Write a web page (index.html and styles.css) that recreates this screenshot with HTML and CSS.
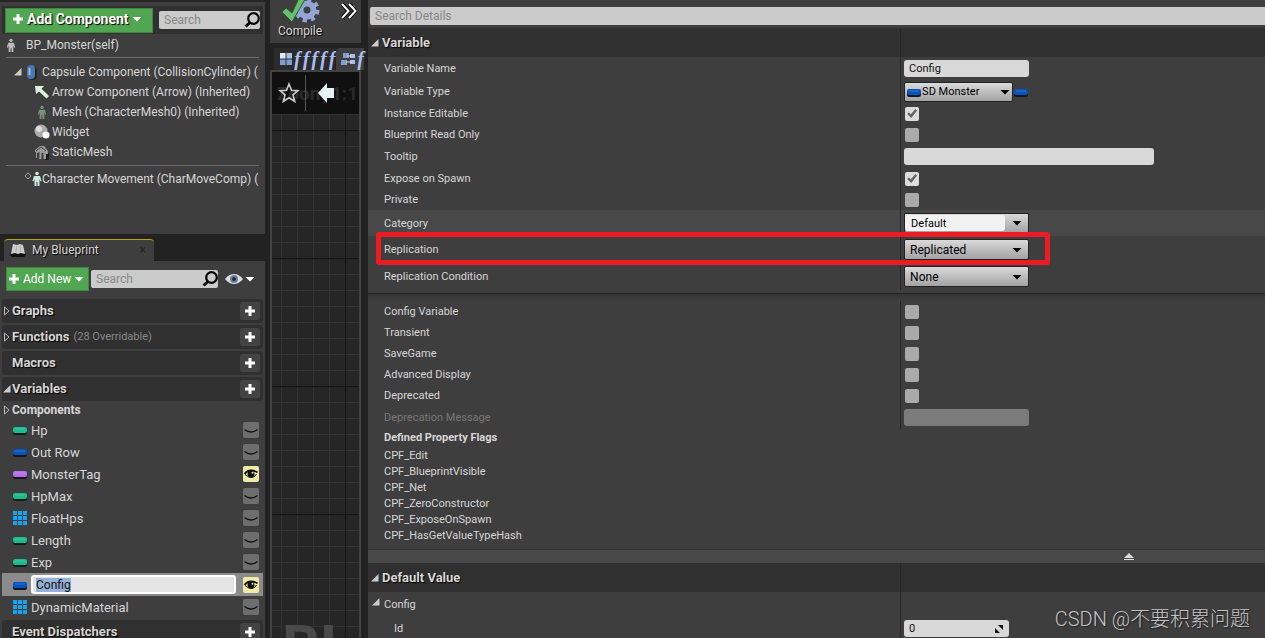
FILE: index.html
```html
<!DOCTYPE html>
<html lang="en">
  <head>
    <meta charset="utf-8">
    <title>BP_Monster</title>
    <link rel="stylesheet" href="styles.css">
  </head>
  <body>
    <!-- shared icons -->
    <svg class="defs" width="0" height="0">
      <symbol id="plus" viewBox="0 0 12 12"><path d="M4.500 1h3v3.500H11v3H7.500V11h-3V7.500H1v-3h3.500z" fill="#fff"/></symbol>
      <symbol id="down" viewBox="0 0 10 8"><path d="M.5 2h9L5 6.500z" fill="currentColor"/></symbol>
      <symbol id="search" viewBox="0 0 16 16"><circle cx="9.500" cy="6.500" r="5.300" fill="none" stroke="#000" stroke-width="2.200"/><path d="M6 10.500L1.500 14.500" stroke="#000" stroke-width="3"/></symbol>
      <symbol id="closed" viewBox="0 0 6 10"><path d="M.5 1v8L5 5z" fill="none" stroke="#bbb"/></symbol>
      <symbol id="open" viewBox="0 0 8 8"><path d="M7.500 0v7.500H0z" fill="#ccc"/></symbol>
      <symbol id="pill" viewBox="0 0 14 10"><rect x="0" y="4" width="14" height="6" rx="2" fill="#181818"/><rect x="0" y="2" width="14" height="6" rx="2" fill="currentColor"/><path d="M2 4h10" stroke="#fff" stroke-opacity=".2"/></symbol>
      <symbol id="array" viewBox="0 0 14 14"><path d="M0 0h4v4H0zM5 0h4v4H5zM10 0h4v4h-4zM0 5h4v4H0zM5 5h4v4H5zM10 5h4v4h-4zM0 10h4v4H0zM5 10h4v4H5zM10 10h4v4h-4z" fill="#12a5f4"/></symbol>
      <symbol id="shut" viewBox="0 0 16 16"><path d="M1.500 7.500Q8 12.500 14.500 7.500" fill="none" stroke="#111" stroke-width="1.300"/></symbol>
      <symbol id="eye" viewBox="0 0 16 16"><path d="M1.500 8Q4 4.500 8 4.500t6.500 2" fill="none" stroke="#111" stroke-width="1.800"/><path d="M2 8.500Q6 12 9 11.500T13.500 8" fill="none" stroke="#111"/><circle cx="8" cy="8" r="3.500" fill="#111"/><circle cx="9.500" cy="6.800" r="1" fill="#eee9a8"/></symbol>
      <symbol id="person" viewBox="0 0 10 16"><circle cx="5" cy="2.500" r="1.800" fill="currentColor"/><path d="M2 5h6l1.500 5-1 .4L7.500 8v7H5.500v-4h-1v4H2.500V8l-1 2.400-1-.4z" fill="currentColor"/></symbol>
    </svg>

    <div class="editor">
      <div class="sidebar">
        <section class="components">
          <div class="components-bar">
            <button class="green add-component"><svg width="12" height="12"><use href="#plus"/></svg>Add Component<svg width="10" height="8"><use href="#down"/></svg></button>
            <label class="search"><input type="text" placeholder="Search" aria-label="Search components"><svg width="16" height="16"><use href="#search"/></svg></label>
          </div>
          <ul class="tree">
            <li class="self"><svg class="grey" width="10" height="15"><use href="#person"/></svg>BP_Monster(self)</li>
            <li class="root"><svg width="8" height="8"><use href="#open"/></svg><svg width="10" height="15" viewBox="0 0 10 15"><rect x="2" y="2" width="8" height="13" rx="4" fill="#222"/><rect x="0" y="0" width="8" height="14" rx="4" fill="#4a78ad"/><path d="M2.500 3v7" stroke="#94b9dc" stroke-width="2"/></svg>Capsule Component (CollisionCylinder) (</li>
            <li class="child"><svg width="14" height="14" viewBox="0 0 14 14"><path d="M0 1h9L6.500 3.800 14 11l-2.500 2.500L4 6.500 1 9z" fill="#dcf3dc"/></svg>Arrow Component (Arrow) (Inherited)</li>
            <li class="child"><svg class="moss" width="14" height="15"><use href="#person"/></svg>Mesh (CharacterMesh0) (Inherited)</li>
            <li class="child"><svg width="16" height="16" viewBox="0 0 16 16"><circle cx="7" cy="7" r="6.500" fill="#aaa"/><circle cx="5" cy="5" r="3" fill="#ddd"/><circle cx="12" cy="11" r="3.500" fill="#fff"/></svg>Widget</li>
            <li class="child"><svg width="14" height="15" viewBox="0 0 14 15"><path d="M10 8h4v7h-4z" fill="#1c1c1c"/><path d="M0 5l5-4 4 0 4 5v3h-2v5H8.500V8h-2v6H4V8H2v5H1V7H0z" fill="#999"/><path d="M1 6l5-4 5 4M4 7v6" stroke="#444" fill="none"/></svg>StaticMesh</li>
            <li class="movement"><svg width="8" height="14" viewBox="0 0 8 14"><path d="M4 .8L7 4 4 7 1 4z" fill="none" stroke="#9aa89a"/></svg><svg class="mint" width="10" height="16"><use href="#person"/></svg>Character Movement (CharMoveComp) (I</li>
          </ul>
        </section>

        <div class="tab"><svg width="16" height="14" viewBox="0 0 16 14"><path d="M0 12l1-2h14l1 2-2 2H2z" fill="#111"/><path d="M3 1l4 1 3-1 3 1 2 9-4-1-3 1-3-1-4 1z" fill="#ccc"/><path d="M6.500 3L6 9M10 3l.5 6" stroke="#aaa"/></svg>My Blueprint<button aria-label="Close tab">×</button></div>
        <section class="blueprint">
          <div class="blueprint-bar">
            <button class="green add-new"><svg width="12" height="12"><use href="#plus"/></svg>Add New<svg width="10" height="8"><use href="#down"/></svg></button>
            <label class="search"><input type="text" placeholder="Search" aria-label="Search blueprint"><svg width="16" height="16"><use href="#search"/></svg></label>
            <button class="view" aria-label="View options"><svg width="18" height="12" viewBox="0 0 18 12"><path d="M0 6Q4 1 9 1t9 5q-4 5-9 5T0 6z" fill="#ddd"/><circle cx="9" cy="6" r="4" fill="#6c7f9c"/><circle cx="9" cy="6" r="2" fill="#222c40"/></svg><svg width="10" height="8"><use href="#down"/></svg></button>
          </div>

          <div class="group"><svg width="6" height="10"><use href="#closed"/></svg><b>Graphs</b><button aria-label="Add graph"><svg width="12" height="12"><use href="#plus"/></svg></button></div>
          <div class="group"><svg width="6" height="10"><use href="#closed"/></svg><b>Functions</b><small>(28 Overridable)</small><button aria-label="Add function"><svg width="12" height="12"><use href="#plus"/></svg></button></div>
          <div class="group"><svg width="6" height="10"></svg><b>Macros</b><button aria-label="Add macro"><svg width="12" height="12"><use href="#plus"/></svg></button></div>
          <div class="group opened"><svg width="8" height="8"><use href="#open"/></svg><b>Variables</b><button aria-label="Add variable"><svg width="12" height="12"><use href="#plus"/></svg></button></div>
          <div class="subgroup"><svg width="6" height="10"><use href="#closed"/></svg><b>Components</b></div>

          <ul class="variables">
            <li><svg class="float" width="14" height="10"><use href="#pill"/></svg>Hp<button aria-label="Show Hp"><svg width="16" height="16"><use href="#shut"/></svg></button></li>
            <li><svg class="struct" width="14" height="10"><use href="#pill"/></svg>Out Row<button aria-label="Show Out Row"><svg width="16" height="16"><use href="#shut"/></svg></button></li>
            <li><svg class="name" width="14" height="10"><use href="#pill"/></svg>MonsterTag<button class="on" aria-label="Hide MonsterTag"><svg width="16" height="16"><use href="#eye"/></svg></button></li>
            <li><svg class="float" width="14" height="10"><use href="#pill"/></svg>HpMax<button aria-label="Show HpMax"><svg width="16" height="16"><use href="#shut"/></svg></button></li>
            <li><svg width="14" height="14"><use href="#array"/></svg>FloatHps<button aria-label="Show FloatHps"><svg width="16" height="16"><use href="#shut"/></svg></button></li>
            <li><svg class="float" width="14" height="10"><use href="#pill"/></svg>Length<button aria-label="Show Length"><svg width="16" height="16"><use href="#shut"/></svg></button></li>
            <li><svg class="float" width="14" height="10"><use href="#pill"/></svg>Exp<button aria-label="Show Exp"><svg width="16" height="16"><use href="#shut"/></svg></button></li>
            <li class="selected"><svg class="struct" width="14" height="10"><use href="#pill"/></svg><input id="rename" type="text" value="Config" aria-label="Variable name"><button class="on" aria-label="Hide Config"><svg width="16" height="16"><use href="#eye"/></svg></button></li>
            <li><svg width="14" height="14"><use href="#array"/></svg>DynamicMaterial<button aria-label="Show DynamicMaterial"><svg width="16" height="16"><use href="#shut"/></svg></button></li>
          </ul>
          <div class="group"><svg width="6" height="10"></svg><b>Event Dispatchers</b><button aria-label="Add dispatcher"><svg width="12" height="12"><use href="#plus"/></svg></button></div>
        </section>
      </div>

      <div class="middle">
        <div class="toolbar">
          <button class="compile">
            <svg width="42" height="24" viewBox="0 0 42 24">
              <circle cx="28" cy="10" r="6.500" fill="none" stroke="#93a5d6" stroke-width="6"/>
              <circle cx="28" cy="10" r="10.500" fill="none" stroke="#93a5d6" stroke-width="4" stroke-dasharray="4.200 4.050"/>
              <path d="M3 12l4-4 6 5L21-4h7L13 22z" fill="#68bd6e" stroke="#2c5c30"/>
            </svg>
            Compile
          </button>
          <button class="more" aria-label="More tools"><svg width="16" height="18" viewBox="0 0 16 18"><path d="M1 2l6.500 7L1 16M8 2l6.500 7L8 16" fill="none" stroke="#000" stroke-width="4"/><path d="M1 2l6.500 7L1 16M8 2l6.500 7L8 16" fill="none" stroke="#fff" stroke-width="2"/></svg></button>
        </div>
        <div class="graph-tabs">
          <div class="graph-tab">
            <svg width="12" height="14" viewBox="0 0 13 15"><path d="M0 1h6v6H0z" fill="#dce8f5"/><path d="M7 1h6v6H7z" fill="#a9c0e0"/><path d="M0 8h6v6H0zM7 8h6v6H7z" fill="#7f9dcd"/></svg>
            <i>f</i><i>f</i><i>f</i><i>f</i><i>f</i>
          </div>
          <div class="graph-tab lit">
            <svg width="14" height="15" viewBox="0 0 14 15"><path d="M2 1h6v5H2zM0 8h6v5H0z" fill="#7f9dcd"/><path d="M9 2h5v4H9zM9 8h5v4H9z" fill="#a9bdf0"/><path d="M6 4h4M5 10h5" stroke="#ddd"/></svg>
            <i>f</i>
          </div>
        </div>
        <div class="graph">
          <div class="graph-bar">
            <span class="zoom">Zoom 1:1</span>
            <button aria-label="Bookmark"><svg width="22" height="22" viewBox="0 0 22 22"><path d="M11 2l2.500 6.300 6.500.4-5 4.200 1.700 6.600L11 15.800l-5.700 3.700L7 12.900 2 8.700l6.500-.4z" fill="none" stroke="#ccc" stroke-width="1.600"/></svg></button>
            <button class="back" aria-label="Back"><svg width="18" height="22" viewBox="0 0 18 22"><path d="M0 11L9 1v5h7v10H9v5z" fill="#e4f3f5"/></svg></button>
          </div>
          <div class="grid"><span class="watermark">BL</span></div>
        </div>
      </div>

      <main class="details">
        <div class="details-search"><input type="text" placeholder="Search Details" aria-label="Search Details"></div>
        <div class="head"><h2><svg width="8" height="8"><use href="#open"/></svg>Variable</h2><div class="value"></div></div>
        <div class="row"><label for="vname">Variable Name</label><div class="value"><input class="text" id="vname" type="text" value="Config"></div></div>
        <div class="row"><label for="vtype">Variable Type</label><div class="value"><div class="combo type"><select id="vtype"><option>SD Monster</option></select><svg class="struct lead" width="14" height="10"><use href="#pill"/></svg><svg width="10" height="8"><use href="#down"/></svg></div><svg class="struct" width="14" height="10"><use href="#pill"/></svg></div></div>
        <div class="row short"><label for="editable">Instance Editable</label><div class="value"><input id="editable" type="checkbox" checked></div></div>
        <div class="row short"><label for="readonly">Blueprint Read Only</label><div class="value"><input id="readonly" type="checkbox"></div></div>
        <div class="row"><label for="tooltip">Tooltip</label><div class="value"><input class="text wide" id="tooltip" type="text"></div></div>
        <div class="row short"><label for="expose">Expose on Spawn</label><div class="value"><input id="expose" type="checkbox" checked></div></div>
        <div class="row short"><label for="private">Private</label><div class="value"><input id="private" type="checkbox"></div></div>
        <div class="row tall hover"><label for="category">Category</label><div class="value"><div class="category"><input id="category" type="text" value="Default"><button aria-label="Choose category"><svg width="10" height="8"><use href="#down"/></svg></button></div></div></div>
        <div class="row tall marked"><label for="replication">Replication</label><div class="value"><div class="combo"><select id="replication"><option>Replicated</option></select><svg width="10" height="8"><use href="#down"/></svg></div></div></div>
        <div class="row tall"><label for="condition">Replication Condition</label><div class="value"><div class="combo"><select id="condition"><option>None</option></select><svg width="10" height="8"><use href="#down"/></svg></div></div></div>

        <div class="advanced">
          <div class="row short"><label for="configvar">Config Variable</label><div class="value"><input id="configvar" type="checkbox"></div></div>
          <div class="row short"><label for="transient">Transient</label><div class="value"><input id="transient" type="checkbox"></div></div>
          <div class="row short"><label for="savegame">SaveGame</label><div class="value"><input id="savegame" type="checkbox"></div></div>
          <div class="row short"><label for="advdisplay">Advanced Display</label><div class="value"><input id="advdisplay" type="checkbox"></div></div>
          <div class="row short"><label for="deprecated">Deprecated</label><div class="value"><input id="deprecated" type="checkbox"></div></div>
          <div class="row disabled"><label for="message">Deprecation Message</label><div class="value"><input class="text" id="message" type="text" disabled></div></div>
          <h3>Defined Property Flags</h3>
          <ul class="flags">
            <li>CPF_Edit</li>
            <li>CPF_BlueprintVisible</li>
            <li>CPF_Net</li>
            <li>CPF_ZeroConstructor</li>
            <li>CPF_ExposeOnSpawn</li>
            <li>CPF_HasGetValueTypeHash</li>
          </ul>
        </div>
        <button class="collapse" aria-label="Collapse"><svg width="10" height="8" viewBox="0 0 10 8"><path d="M5 0l5 5H0zM0 6h10v1H0z" fill="#ddd"/></svg></button>

        <div class="head"><h2><svg width="8" height="8"><use href="#open"/></svg>Default Value</h2><div class="value"></div></div>
        <div class="row parent"><span><svg width="8" height="8"><use href="#open"/></svg>Config</span><div class="value"></div></div>
        <div class="row nested"><label for="rowid">Id</label><div class="value"><div class="spin"><input class="text" id="rowid" type="text" value="0"><svg width="10" height="10" viewBox="0 0 10 10"><path d="M4 1h5v5zM1 4v5h5z" fill="#111"/></svg></div></div></div>
      </main>
    </div>

    <div class="credit">CSDN @不要积累问题</div>

    <script>
      // start with the variable name ready to be typed over
      const rename = document.getElementById('rename');
      rename.focus();
      rename.select();
    </script>
  </body>
</html>
```
FILE: styles.css
```css
* {
  box-sizing: border-box;
}

body {
  margin: 0;
  background: #222;
  color: #d6d6d6;
  font-family: Roboto, "Noto Sans CJK SC", sans-serif;
  font-size: 12px;
  overflow: hidden;
}

button, input, select {
  font: inherit;
  color: inherit;
  margin: 0;
  padding: 0;
  border: none;
  outline: none;
  background: none;
}

ul {
  list-style: none;
  margin: 0;
  padding: 0;
}

svg {
  flex: none;
  display: block;
}

.defs {
  position: absolute;
}

.editor {
  display: grid;
  grid-template-columns: 270px 98px minmax(0, 1fr);
  height: 100vh;
}

/* colours of the variable kinds */
.float { color: #18bd8b; }
.struct { color: #0753bd; }
.name { color: #b56fe8; }
.grey { color: #bbb; }
.moss { color: #78917c; }
.mint { color: #cdebd7; }

/* Left column */
.sidebar {
  display: flex;
  flex-direction: column;
  min-height: 0;
  padding-right: 5px;
}

.components {
  flex: none;
  height: 234px;
  padding: 4px 2px 0;
  border-top: 2px solid #262626;
  background: #3e3e3e;
}

.components-bar {
  display: flex;
  align-items: center;
  gap: 6px;
  height: 28px;
  padding: 0 3px;
  background: #303030;
}

.green {
  display: flex;
  align-items: center;
  gap: 3px;
  background: #50a651;
  border: 1px solid #3f8740;
  color: #fff;
  white-space: nowrap;
}

.add-component {
  width: 148px;
  height: 25px;
  padding: 0 0 2px 6px;
  font-size: 14px;
  font-weight: bold;
  text-shadow: 1px 1px 1px #000;
}

.add-new {
  width: 83px;
  height: 24px;
  padding-left: 1px;
}

.search {
  display: flex;
  flex: 1;
  align-items: center;
  min-width: 0;
  height: 18px;
  padding: 0 0 0 5px;
  border-radius: 2px;
  background: #cbcbcb;
}

.search input {
  flex: 1;
  min-width: 0;
  color: #111;
}

::placeholder {
  color: #888;
  opacity: 1;
}

.tree {
  padding: 0 4px;
}

.tree li {
  display: flex;
  align-items: center;
  gap: 2px;
  height: 20px;
  white-space: nowrap;
}

.tree .self {
  height: 24px;
  padding-bottom: 1px;
  gap: 10px;
  border-bottom: 1px solid #6a6a6a;
}

.tree .root {
  height: 24px;
  padding: 4px 0 0 8px;
  gap: 5px;
}

.tree .child {
  padding-left: 28px;
}

.tree .child svg {
  width: 16px;
}

.tree .movement {
  height: 27px;
  margin-top: 3px;
  padding-left: 18px;
  gap: 0;
  border-top: 1px solid #6a6a6a;
  overflow: hidden;
}

.tab {
  display: flex;
  flex: none;
  align-items: center;
  gap: 6px;
  width: 150px;
  height: 22px;
  margin: 5px 0 0 4px;
  padding: 0 8px 2px 6px;
  border-top: 1px solid #b8a513;
  border-radius: 4px 4px 0 0;
  background: #3e3e3e;
  text-shadow: 1px 1px 1px #000;
}

.tab button {
  margin-left: auto;
  color: #222;
  text-shadow: none;
}

.blueprint {
  flex: 1;
  min-height: 0;
  padding: 0 2px;
  background: #3e3e3e;
  overflow: hidden;
}

.blueprint-bar {
  display: flex;
  align-items: center;
  gap: 2px;
  height: 38px;
  padding: 0 8px 2px 4px;
}

.view {
  display: flex;
  align-items: center;
  gap: 2px;
  padding-left: 5px;
  color: #fff;
}

.group {
  display: flex;
  align-items: center;
  height: 24px;
  margin-bottom: 2px;
  padding: 0 3px 1px 2px;
  gap: 2px;
  border-radius: 3px;
  background: #303030;
  font-size: 13px;
  text-shadow: 1px 1px 1px #000;
}

.group.opened {
  margin-bottom: 0;
  padding-left: 1px;
  gap: 1px;
}

.group small {
  margin-left: 2px;
  font-size: 11px;
  color: #888;
  text-shadow: none;
}

.group button {
  display: grid;
  place-items: center;
  width: 20px;
  height: 18px;
  margin-left: auto;
  border-radius: 2px;
  background: #444;
}

.subgroup {
  display: flex;
  align-items: center;
  gap: 2px;
  height: 18px;
  padding-left: 2px;
}

.variables {
  margin: 0 0 2px;
  font-size: 13px;
}

.variables li {
  display: flex;
  align-items: center;
  gap: 4px;
  height: 22px;
  padding: 0 4px 0 11px;
}

.variables .selected {
  height: 23px;
  background: #8b8b8b;
}

.variables button {
  margin-left: auto;
  border-radius: 2px;
  background: #6e6e6e;
}

.variables .on {
  background: #eeeba8;
}

.variables input {
  width: 205px;
  height: 19px;
  padding: 0 3px;
  border: 2px solid #fff;
  border-radius: 3px;
  background: #e4e4e4;
  color: #111;
  font-size: 12px;
}

.variables input::selection {
  background: #94b1d6;
  color: #111;
}

/* Graph column */
.middle {
  display: flex;
  flex-direction: column;
  min-height: 0;
  padding-right: 7px;
}

.toolbar {
  display: flex;
  flex: none;
  justify-content: space-between;
  align-items: flex-start;
  height: 43px;
  padding: 0 4px 0 8px;
  background: #3e3e3e;
}

.compile {
  display: flex;
  flex-direction: column;
  align-items: center;
  text-shadow: 1px 1px 1px #000;
}

.more {
  padding-top: 2px;
}

.graph-tabs {
  display: flex;
  flex: none;
  gap: 1px;
  height: 22px;
  margin: 5px 0 0 4px;
}

.graph-tab {
  display: flex;
  align-items: center;
  gap: 2px;
  width: 65px;
  padding-left: 6px;
  background: #2b2b2b;
}

.graph-tab.lit {
  width: 30px;
  padding-left: 5px;
  border-radius: 4px 0 0 0;
  background: #3e3e3e;
}

.graph-tab i {
  color: #a9bdf0;
  font-family: "Liberation Serif", serif;
  font-size: 20px;
  font-weight: bold;
  line-height: 20px;
}

.graph {
  display: flex;
  flex: 1;
  flex-direction: column;
  min-height: 0;
  border: 2px solid #424242;
  border-bottom: none;
}

.graph-bar {
  position: relative;
  display: flex;
  align-items: center;
  height: 42px;
  padding-left: 6px;
  gap: 5px;
  background: #101010;
  overflow: hidden;
}

/* zoom level, faint behind the buttons */
.zoom {
  position: absolute;
  left: 5px;
  color: #2b2b2b;
  font-size: 19px;
  font-weight: bold;
  white-space: nowrap;
}

.graph-bar button {
  position: relative;
}

.graph-bar .back {
  height: 36px;
  padding-left: 12px;
  border-left: 1px solid #555;
}

.grid {
  display: flex;
  flex: 1;
  align-items: flex-end;
  background-color: #262626;
  background-image:
    linear-gradient(90deg, #141414 1px, transparent 1px),
    linear-gradient(#141414 1px, transparent 1px),
    linear-gradient(90deg, #333 1px, transparent 1px),
    linear-gradient(#333 1px, transparent 1px);
  background-size: 128px 128px, 128px 128px, 16px 16px, 16px 16px;
  background-position: 73px 0, 0 16px, 9px 0, 0 0;
  overflow: hidden;
}

.watermark {
  height: 21px;
  margin-left: 10px;
  color: #4a4a4a;
  font-size: 60px;
  font-weight: bold;
  line-height: 60px;
}

/* Details */
.details {
  min-width: 0;
  background: #3e3e3e;
  font-size: 11px;
  overflow: hidden;
}

.details-search {
  height: 28px;
  padding: 7px 0 3px 2px;
}

.details-search input {
  display: block;
  width: 100%;
  height: 18px;
  padding: 0 5px;
  border-radius: 2px 0 0 2px;
  background: #cbcbcb;
  color: #111;
  font-size: 12px;
}

.head, .row {
  display: grid;
  grid-template-columns: 35fr 24fr;
  align-items: center;
  height: 23px;
}

.head {
  height: 29px;
  background: #303030;
}

.head h2 {
  display: flex;
  align-items: center;
  gap: 3px;
  margin: 0;
  padding-left: 3px;
  font-size: 13px;
  text-shadow: 1px 1px 1px #000;
}

.row label {
  padding-left: 16px;
}

.row.short {
  height: 21px;
}

.row.tall {
  height: 27px;
}

.row.hover {
  height: 26px;
  background: #484848;
}

.value {
  display: flex;
  align-items: center;
  gap: 1px;
  height: 100%;
  padding-left: 3px;
  border-left: 1px solid #272727;
}

.text {
  width: 125px;
  height: 17px;
  padding: 0 5px;
  border-radius: 3px;
  background: #d8d8d8;
  color: #111;
}

.text.wide {
  width: 250px;
}

input[type="checkbox"] {
  display: grid;
  place-items: center;
  appearance: none;
  width: 14px;
  height: 14px;
  margin-left: 1px;
  border-radius: 2px;
  background: #aaa;
}

input[type="checkbox"]:checked {
  background: #dcdcdc;
}

input[type="checkbox"]:checked::before {
  content: "";
  width: 10px;
  height: 9px;
  background: #666;
  clip-path: polygon(0 55%, 18% 38%, 38% 58%, 82% 0, 100% 18%, 42% 100%);
}

.combo {
  display: grid;
  align-items: center;
  width: 125px;
  color: #000;
}

.combo select {
  grid-area: 1 / 1;
  appearance: none;
  height: 21px;
  padding: 0 5px;
  border: 1px solid #222;
  border-radius: 2px;
  background: linear-gradient(#dadada, #a2a2a2);
  font-size: 12px;
}

.combo svg {
  grid-area: 1 / 1;
  justify-self: end;
  margin-right: 7px;
  pointer-events: none;
}

.combo.type {
  width: 109px;
}

.combo.type select {
  height: 20px;
  padding-left: 17px;
  font-size: 11px;
}

.combo.type svg {
  margin-right: 3px;
}

.combo.type .lead {
  justify-self: start;
  margin: 0 0 0 3px;
}

.category {
  display: flex;
  width: 125px;
  height: 20px;
  border: 1px solid #222;
  background: linear-gradient(#dadada, #a2a2a2);
  color: #000;
}

.category input {
  flex: 1;
  min-width: 0;
  margin: 1px 0;
  padding-left: 6px;
  border-radius: 3px;
  background: #f2f2f2;
}

.category button {
  display: grid;
  place-items: center;
  width: 23px;
}

/* red frame round the replication setting */
.marked {
  position: relative;
}

.marked::after {
  content: "";
  position: absolute;
  top: -4px;
  bottom: -2px;
  left: 8px;
  right: 24%;
  border: 5px solid #ed1c24;
  border-radius: 3px;
  pointer-events: none;
}

.advanced {
  margin-top: 3px;
  padding: 7px 0 5px;
  border-top: 1px solid #222;
  background: linear-gradient(#343434, #3e3e3e 7px);
}

.disabled label {
  color: #777;
}

.disabled .text {
  background: #7b7b7b;
}

.advanced h3 {
  margin: 0 0 2px;
  padding-left: 16px;
  font-size: 11px;
  line-height: 17px;
}

.flags {
  padding-left: 16px;
  line-height: 16px;
}

.collapse {
  display: flex;
  align-items: center;
  justify-content: flex-end;
  width: 100%;
  height: 14px;
  padding-right: 131px;
  border-top: 1px solid #303030;
  background: #484848;
}

.row.parent {
  height: 24px;
}

.parent span {
  display: flex;
  gap: 4px;
  padding-left: 4px;
}

.row.nested {
  height: 25px;
}

.nested label {
  padding-left: 26px;
}

.spin {
  display: grid;
  align-items: center;
  width: 105px;
}

.spin .text {
  grid-area: 1 / 1;
  width: 100%;
}

.spin svg {
  grid-area: 1 / 1;
  justify-self: end;
  margin-right: 5px;
}

/* author credit laid over the corner */
.credit {
  position: absolute;
  right: 15px;
  bottom: 4px;
  color: #c4c4c4;
  font-size: 20px;
  font-weight: 300;
  line-height: 30px;
  text-shadow: 1px 1px 1px #222;
}
```
